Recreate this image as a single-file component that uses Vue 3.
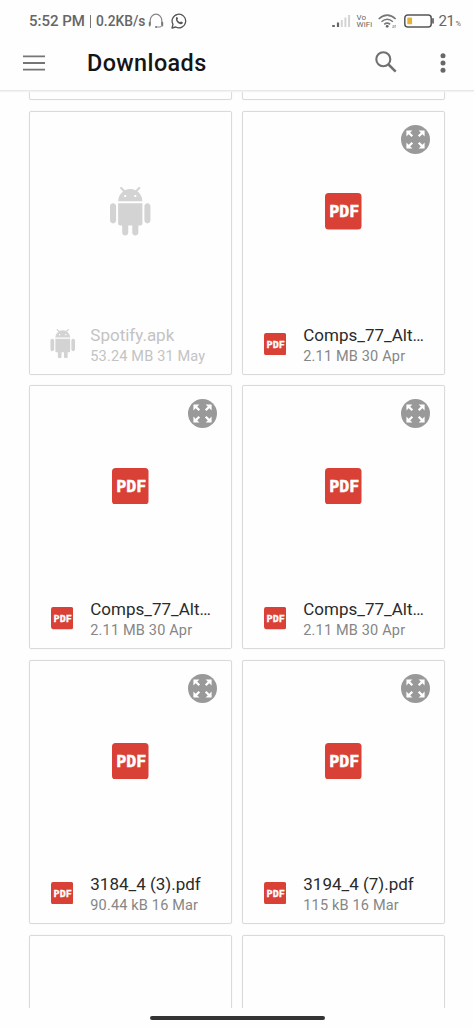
<script setup>
const files = [
  { id: 1, blank: true },
  { id: 2, blank: true },
  { id: 3, type: 'apk', name: 'Spotify.apk', meta: '53.24 MB 31 May' },
  { id: 4, type: 'pdf', name: 'Comps_77_Alt…', meta: '2.11 MB 30 Apr' },
  { id: 5, type: 'pdf', name: 'Comps_77_Alt…', meta: '2.11 MB 30 Apr' },
  { id: 6, type: 'pdf', name: 'Comps_77_Alt…', meta: '2.11 MB 30 Apr' },
  { id: 7, type: 'pdf', name: '3184_4 (3).pdf', meta: '90.44 kB 16 Mar' },
  { id: 8, type: 'pdf', name: '3194_4 (7).pdf', meta: '115 kB 16 Mar' },
  { id: 9, blank: true },
  { id: 10, blank: true },
]
const androidPath =
  'M6 18c0 .55.45 1 1 1h1v3.5c0 .83.67 1.5 1.5 1.5s1.5-.67 1.5-1.5V19h2v3.5c0 .83.67 1.5 1.5 1.5s1.5-.67 1.5-1.5V19h1c.55 0 1-.45 1-1V8H6v10zM3.5 8C2.67 8 2 8.67 2 9.500v7c0 .83.67 1.5 1.5 1.5S5 17.330 5 16.500v-7C5 8.670 4.330 8 3.500 8zm17 0c-.83 0-1.500.67-1.500 1.500v7c0 .83.67 1.500 1.500 1.500s1.500-.67 1.500-1.500v-7c0-.83-.67-1.500-1.500-1.500zm-4.970-5.840l1.300-1.300c.2-.2.2-.51 0-.71-.2-.2-.51-.2-.71 0l-1.480 1.480C13.850 1.230 12.950 1 12 1c-.96 0-1.860.23-2.660.63L7.850.15c-.2-.2-.51-.2-.71 0-.2.2-.2.51 0 .71l1.310 1.310C6.970 3.260 6 5.010 6 7h12c0-1.990-.97-3.750-2.470-4.840zM10 5H9V4h1v1zm5 0h-1V4h1v1z'
</script>

<template>
  <div class="screen">
    <header class="top">
      <div class="status">
        <span class="clock">5:52 PM</span>
        <span class="sep"></span>
        <span class="speed">0.2KB/s</span>
        <svg class="headset" viewBox="0 0 16 16" width="16" height="16">
          <path d="M2.200 12V7.500a5.800 6.300 0 0 1 11.600 0V12" fill="none" stroke="#858585" stroke-width="1.200" />
          <path d="M1.700 9.600v3M14.300 9.600v3" stroke="#777" stroke-width="1.800" stroke-linecap="round" />
          <path d="M13.800 12.500q-.3 1.500-2 1.500H8" fill="none" stroke="#858585" stroke-width="1" />
          <circle cx="8" cy="14" r="1" fill="#777" />
        </svg>
        <svg class="whatsapp" viewBox="0 0 16 16" width="16" height="16">
          <path d="M1 15l1-3.600A6.800 6.800 0 1 1 4.700 14z" fill="none" stroke="#555" stroke-width="1.300" stroke-linejoin="round" />
          <path d="M5.200 4.200c.6-.5 1.100-.3 1.300.2l.5 1.200c.1.400-.5.900-.6 1.200.5 1.100 1.400 2 2.600 2.500.4-.1.800-.9 1.200-.8l1.400.7c.5.300.2 1.200-.3 1.600-2.600 1.700-7.700-2.700-6.100-6.600z" fill="#555" />
        </svg>
        <span class="grow"></span>
        <svg class="signal" viewBox="0 0 19 14" width="19" height="14">
          <path d="M1.500 11v2" stroke="#666" stroke-width="2.600" />
          <path d="M6 8.500V13" stroke="#666" stroke-width="2.200" />
          <path d="M9.800 6v7M13.400 3.500V13M17.100 1v12" stroke="#d2d2d2" stroke-width="1.900" />
        </svg>
        <span class="vowifi"><span>Vo</span><span>WiFi</span></span>
        <svg class="wifi" viewBox="0 0 19 15" width="19" height="15">
          <g fill="none" stroke="#777" stroke-width="1.500">
            <path d="M.7 5Q9.200-2.700 17.700 5" />
            <path d="M3.500 7.800q5.700-5 11.400 0" />
            <path d="M6.200 10.400q3-2.500 6 0" />
          </g>
          <circle cx="9.200" cy="12.300" r="1.400" fill="#666" />
          <path d="M15.200 11v3M14.400 13l.8.9M17 14v-3M17.800 11.900L17 11" fill="none" stroke="#999" stroke-width=".9" />
        </svg>
        <svg class="battery" viewBox="0 0 31 14" width="31" height="14">
          <rect x=".8" y=".9" width="26.400" height="12" rx="3" fill="none" stroke="#555" stroke-width="1.500" />
          <rect x="3.300" y="3.500" width="4.800" height="6.800" rx=".6" fill="#e6b23e" />
          <path d="M29 4.800v4.200" stroke="#555" stroke-width="1.600" stroke-linecap="round" />
        </svg>
        <span class="level">21</span><span class="pct">%</span>
      </div>
      <div class="bar">
        <svg class="menu" viewBox="0 0 22 16" width="22" height="16">
          <path d="M0 1.400h22M0 8h22M0 14.600h22" stroke="#757575" stroke-width="1.900" />
        </svg>
        <h1>Downloads</h1>
        <svg class="search" viewBox="0 0 22 22" width="22" height="22">
          <circle cx="8.300" cy="8.300" r="7" fill="none" stroke="#707070" stroke-width="2.100" />
          <path d="M13.500 13.500l7.200 7.200" stroke="#707070" stroke-width="2.500" />
        </svg>
        <svg class="more" viewBox="0 0 6 20" width="6" height="20">
          <g fill="#686868">
            <circle cx="3" cy="2.700" r="2.500" /><circle cx="3" cy="10" r="2.500" /><circle cx="3" cy="17.300" r="2.500" />
          </g>
        </svg>
      </div>
    </header>

    <main class="viewport">
      <div class="grid">
        <article v-for="f in files" :key="f.id" class="card" :class="f.type">
          <template v-if="!f.blank">
            <svg v-if="f.type === 'pdf'" class="expand" viewBox="0 0 29 29" width="29" height="29">
              <circle cx="14.500" cy="14.500" r="14.500" fill="#999" />
              <g fill="#fff" stroke="#fff">
                <path d="M7 7l4.300 4.300M22 7l-4.300 4.300M7 22l4.300-4.300M22 22l-4.300-4.300" stroke-width="2.300" />
                <path d="M5.400 5.400h6l-6 6zM23.600 5.400h-6l6 6zM5.400 23.600h6l-6-6zM23.600 23.600h-6l6-6z" stroke="none" />
              </g>
            </svg>
            <div class="preview">
              <svg v-if="f.type === 'pdf'" viewBox="0 0 36.500 36.500" width="36.500" height="36.500">
                <rect width="36.500" height="36.500" rx="3.500" fill="#d94136" />
                <text class="pdf-label" x="4.300" y="24" textLength="30" lengthAdjust="spacingAndGlyphs">PDF</text>
              </svg>
              <svg v-else viewBox="0 0 24 24" width="48.500" height="48.500"><path :d="androidPath" fill="#d3d3d3" /></svg>
            </div>
            <footer class="info">
              <div class="thumb">
                <svg v-if="f.type === 'pdf'" viewBox="0 0 36.500 36.500" width="22.200" height="22.200">
                  <rect width="36.500" height="36.500" rx="3.500" fill="#d94136" />
                  <text class="pdf-label" x="4.300" y="24" textLength="30" lengthAdjust="spacingAndGlyphs">PDF</text>
                </svg>
                <svg v-else viewBox="0 0 24 24" width="29.500" height="29.500"><path :d="androidPath" fill="#d3d3d3" /></svg>
              </div>
              <div class="texts">
                <div class="name">{{ f.name }}</div>
                <div class="meta">{{ f.meta }}</div>
              </div>
            </footer>
          </template>
        </article>
      </div>
    </main>
    <div class="nav"><div class="pill"></div></div>
  </div>
</template>

<style>
body { background: #fefefe; }
</style>

<style scoped>
.screen {
  width: 474px;
  height: 1027px;
  display: flex;
  flex-direction: column;
  overflow: hidden;
  background: #fefefe;
  font-family: Roboto, "Liberation Sans", sans-serif;
}
.top { height: 91px; flex: none; border-bottom: 1px solid #e8e8e8; box-shadow: 0 1px 1px #f3f3f3; z-index: 1; }
.top, .bar, .status { box-sizing: border-box; }
.status { height: 42px; padding: 0 13px 0 29px; display: flex; align-items: center; color: #666; white-space: nowrap; }
.clock, .speed { font-weight: 500; line-height: 20px; }
.clock { font-size: 15px; }
.sep { width: 1px; height: 13px; background: #777; margin: 1px 5px 0 5px; }
.speed { font-size: 13.800px; }
.headset { margin-left: 3px; }
.whatsapp { margin-left: 7px; }
.grow { flex: 1; }
.signal { margin-right: 5px; }
.vowifi { display: flex; flex-direction: column; font-size: 8px; line-height: 7.500px; font-weight: 400; letter-spacing: .1px; width: 17px; margin-right: 5px; color: #666; }
.wifi { margin-right: 7px; }
.battery { margin-right: 3px; }
.level { font-size: 15px; letter-spacing: -.4px; }
.pct { font-size: 7.500px; margin: 5px 0 0 1px; }
.bar { height: 42px; display: flex; align-items: center; padding: 0 28px 0 23px; }
.menu { margin-right: 42px; }
h1 { margin: 0; font-size: 23.400px; font-weight: 500; letter-spacing: .4px; color: #151515; line-height: 30px; flex: 1; }
.search { margin: -2px 43px 0 0; }
.viewport { flex: none; height: 917px; overflow: hidden; }
.grid {
  margin: -255.200px 0 0 29.300px;
  display: grid;
  grid-template-columns: 202.300px 202.300px;
  grid-auto-rows: 264px;
  gap: 10.800px 10.700px;
}
.card { position: relative; box-sizing: border-box; border: 1px solid #dadada; box-shadow: 0 0 1px #e0e0e0; border-radius: 2px; display: flex; flex-direction: column; }
.expand { position: absolute; top: 13px; right: 13.500px; }
.preview { height: 199.500px; flex: none; display: flex; align-items: center; justify-content: center; }
.info { display: flex; align-items: center; height: 65px; flex: none; }
.thumb { width: 64px; display: flex; justify-content: center; flex: none; }
.texts { margin: 3px 0 0 -4px; white-space: nowrap; }
.name { font-size: 17px; line-height: 22px; color: #2a2a2a; }
.meta { font-size: 14.500px; line-height: 21px; letter-spacing: .17px; color: #868686; }
.apk .name, .apk .meta { color: #c3c3c3; }
.pdf-label { font: 700 15.500px "DejaVu Sans Mono", monospace; fill: #fff; stroke: #fff; stroke-width: .5; }
.nav { flex: 1; display: flex; justify-content: center; align-items: center; }
.pill { width: 175px; height: 4px; border-radius: 2px; background: #333; }
</style>
